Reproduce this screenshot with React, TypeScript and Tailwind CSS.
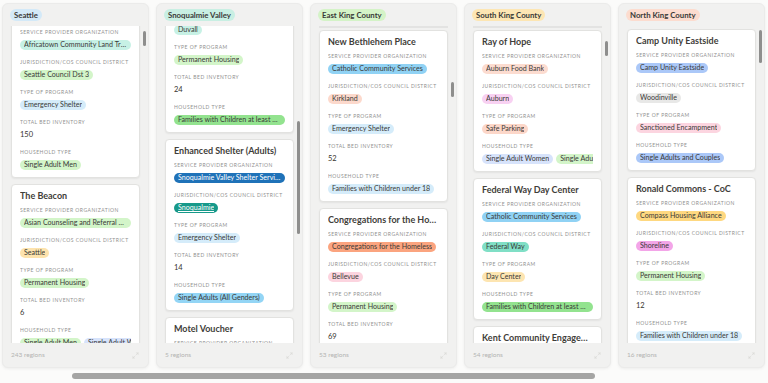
import { Maximize2 } from 'lucide-react';

type Tag = { text: string; cls: string };
type Field = { label: string; tags?: Tag[]; value?: string };
type Card = { title: string; fields: Field[] };
type Column = {
  name: string;
  headCls: string;
  count: string;
  offset: string;
  sliver?: boolean;
  thumb: string;
  cards: Card[];
};

const ORG = 'Service Provider Organization';
const JUR = 'Jurisdiction/COS Council District';
const TYPE = 'Type of Program';
const BEDS = 'Total Bed Inventory';
const HH = 'Household Type';

const mint = 'bg-[#c7f1e5]';
const green = 'bg-[#d3f5c9]';
const sky = 'bg-[#d5ecfa]';
const strongGreen = 'bg-[#93e38f]';

const columns: Column[] = [
  {
    name: 'Seattle',
    headCls: 'bg-[#d3e9f8]',
    count: '243 regions',
    offset: '-mt-[20px]',
    thumb: 'top-[27px] h-[15px]',
    cards: [
      {
        title: 'Africatown Plaza',
        fields: [
          { label: ORG, tags: [{ text: 'Africatown Community Land Trust', cls: mint }] },
          { label: JUR, tags: [{ text: 'Seattle Council Dst 3', cls: green }] },
          { label: TYPE, tags: [{ text: 'Emergency Shelter', cls: sky }] },
          { label: BEDS, value: '150' },
          { label: HH, tags: [{ text: 'Single Adult Men', cls: green }] },
        ],
      },
      {
        title: 'The Beacon',
        fields: [
          { label: ORG, tags: [{ text: 'Asian Counseling and Referral Service', cls: green }] },
          { label: JUR, tags: [{ text: 'Seattle', cls: 'bg-[#fde3ad]' }] },
          { label: TYPE, tags: [{ text: 'Permanent Housing', cls: green }] },
          { label: BEDS, value: '6' },
          {
            label: HH,
            tags: [
              { text: 'Single Adult Men', cls: green },
              { text: 'Single Adult Women', cls: 'bg-[#d7e3fb]' },
            ],
          },
        ],
      },
    ],
  },
  {
    name: 'Snoqualmie Valley',
    headCls: 'bg-[#c8efe3]',
    count: '5 regions',
    offset: '-mt-[65px]',
    thumb: 'top-[117px] h-[113px]',
    cards: [
      {
        title: 'Duvall Shelter',
        fields: [
          { label: ORG, tags: [{ text: 'Snoqualmie Valley Shelter Services', cls: mint }] },
          { label: JUR, tags: [{ text: 'Duvall', cls: mint }] },
          { label: TYPE, tags: [{ text: 'Permanent Housing', cls: green }] },
          { label: BEDS, value: '24' },
          { label: HH, tags: [{ text: 'Families with Children at least one adult', cls: strongGreen }] },
        ],
      },
      {
        title: 'Enhanced Shelter (Adults)',
        fields: [
          { label: ORG, tags: [{ text: 'Snoqualmie Valley Shelter Services', cls: 'bg-[#1f72b8] text-white' }] },
          { label: JUR, tags: [{ text: 'Snoqualmie', cls: 'bg-[#17998a] text-white underline' }] },
          { label: TYPE, tags: [{ text: 'Emergency Shelter', cls: sky }] },
          { label: BEDS, value: '14' },
          { label: HH, tags: [{ text: 'Single Adults (All Genders)', cls: 'bg-[#93d5f5]' }] },
        ],
      },
      {
        title: 'Motel Voucher',
        fields: [
          { label: ORG, tags: [{ text: 'Snoqualmie Valley Shelter Services', cls: mint }] },
        ],
      },
    ],
  },
  {
    name: 'East King County',
    headCls: 'bg-[#d4f3c7]',
    count: '53 regions',
    offset: '',
    sliver: true,
    thumb: 'top-[78px] h-[15px]',
    cards: [
      {
        title: 'New Bethlehem Place',
        fields: [
          { label: ORG, tags: [{ text: 'Catholic Community Services', cls: 'bg-[#90d2f4]' }] },
          { label: JUR, tags: [{ text: 'Kirkland', cls: 'bg-[#fcd9cc]' }] },
          { label: TYPE, tags: [{ text: 'Emergency Shelter', cls: sky }] },
          { label: BEDS, value: '52' },
          { label: HH, tags: [{ text: 'Families with Children under 18', cls: sky }] },
        ],
      },
      {
        title: 'Congregations for the Homeless Shelter',
        fields: [
          { label: ORG, tags: [{ text: 'Congregations for the Homeless', cls: 'bg-[#fba47f]' }] },
          { label: JUR, tags: [{ text: 'Bellevue', cls: 'bg-[#fcd4df]' }] },
          { label: TYPE, tags: [{ text: 'Permanent Housing', cls: green }] },
          { label: BEDS, value: '69' },
        ],
      },
    ],
  },
  {
    name: 'South King County',
    headCls: 'bg-[#fde6b3]',
    count: '54 regions',
    offset: '',
    sliver: true,
    thumb: 'top-[37px] h-[15px]',
    cards: [
      {
        title: 'Ray of Hope',
        fields: [
          { label: ORG, tags: [{ text: 'Auburn Food Bank', cls: 'bg-[#fcdcd0]' }] },
          { label: JUR, tags: [{ text: 'Auburn', cls: 'bg-[#f8d1f2]' }] },
          { label: TYPE, tags: [{ text: 'Safe Parking', cls: 'bg-[#fcd7c9]' }] },
          {
            label: HH,
            tags: [
              { text: 'Single Adult Women', cls: 'bg-[#d7e3fb]' },
              { text: 'Single Adult Men', cls: green },
            ],
          },
        ],
      },
      {
        title: 'Federal Way Day Center',
        fields: [
          { label: ORG, tags: [{ text: 'Catholic Community Services', cls: 'bg-[#90d2f4]' }] },
          { label: JUR, tags: [{ text: 'Federal Way', cls: 'bg-[#80dfc6]' }] },
          { label: TYPE, tags: [{ text: 'Day Center', cls: 'bg-[#fde5b1]' }] },
          { label: HH, tags: [{ text: 'Families with Children at least one adult', cls: strongGreen }] },
        ],
      },
      {
        title: 'Kent Community Engagement Center',
        fields: [{ label: ORG, tags: [{ text: 'Catholic Community Services', cls: 'bg-[#90d2f4]' }] }],
      },
    ],
  },
  {
    name: 'North King County',
    headCls: 'bg-[#fcdccf]',
    count: '16 regions',
    offset: '',
    thumb: 'top-[26px] h-[33px]',
    cards: [
      {
        title: 'Camp Unity Eastside',
        fields: [
          { label: ORG, tags: [{ text: 'Camp Unity Eastside', cls: 'bg-[#abc8f8]' }] },
          { label: JUR, tags: [{ text: 'Woodinville', cls: 'bg-[#e8e8e7]' }] },
          { label: TYPE, tags: [{ text: 'Sanctioned Encampment', cls: 'bg-[#fcd5e0]' }] },
          { label: HH, tags: [{ text: 'Single Adults and Couples', cls: 'bg-[#abc8f8]' }] },
        ],
      },
      {
        title: 'Ronald Commons - CoC',
        fields: [
          { label: ORG, tags: [{ text: 'Compass Housing Alliance', cls: 'bg-[#fed880]' }] },
          { label: JUR, tags: [{ text: 'Shoreline', cls: 'bg-[#f3a5e8]' }] },
          { label: TYPE, tags: [{ text: 'Permanent Housing', cls: green }] },
          { label: BEDS, value: '12' },
          { label: HH, tags: [{ text: 'Families with Children under 18', cls: sky }] },
        ],
      },
    ],
  },
];

function Pill({ tag }: { tag: Tag }) {
  return (
    <span
      className={`flex h-[10px] max-w-full shrink-0 items-center rounded-full px-[4px] text-[7.1px] leading-none text-[#3a3a38] ${tag.cls}`}
    >
      <span className="truncate">{tag.text}</span>
    </span>
  );
}

function BoardCard({ card }: { card: Card }) {
  return (
    <div className="rounded-[4px] border border-[#e2e2e0] bg-white px-[8px] pt-[5px] pb-[7px] shadow-[0_1px_2px_rgba(0,0,0,0.06)]">
      <div className="mb-[5px] truncate text-[9px] leading-[12px] font-bold text-[#3f3e3a]">{card.title}</div>
      <div className="flex flex-col gap-[9px]">
        {card.fields.map((f) => (
          <div key={f.label}>
            <div className="truncate text-[5px] leading-[7px] tracking-[0.1em] text-[#919190] uppercase">{f.label}</div>
            {f.tags ? (
              <div className="mt-[4px] flex gap-[3px] overflow-hidden">
                {f.tags.map((t) => (
                  <Pill key={t.text} tag={t} />
                ))}
              </div>
            ) : (
              <div className="mt-[4px] h-[10px] text-[7.5px] leading-[10px] text-[#37352f]">{f.value}</div>
            )}
          </div>
        ))}
      </div>
    </div>
  );
}

export default function App() {
  return (
    <div className="h-[383px] w-[768px] overflow-hidden bg-[#fbfbfa] font-['Lato','Open_Sans',sans-serif]">
      <div className="flex gap-[7px] pt-[3px] pl-[2px]">
        {columns.map((col) => (
          <div
            key={col.name}
            className="relative flex h-[365px] w-[147px] shrink-0 flex-col rounded-[6px] border border-[#ebebea] bg-[#f1f1f0] shadow-[0_1px_3px_rgba(0,0,0,0.06)]"
          >
            <div className="flex h-[22px] items-start pt-[5px] pl-[7px]">
              <span
                className={`flex h-[12px] items-center rounded-full px-[4px] text-[7.8px] leading-[12px] font-bold text-[#3a3a38] ${col.headCls}`}
              >
                {col.name}
              </span>
            </div>
            <div className="h-[317px] overflow-hidden px-[8px]">
              <div className={`flex flex-col gap-[6px] ${col.offset}`}>
                {col.sliver && <div className="-mb-[4px] h-[2px] bg-[#e3e3e2]" />}
                {!col.sliver && !col.offset && <div className="-mb-[3px] h-[0px]" />}
                {col.cards.map((c) => (
                  <BoardCard key={c.title} card={c} />
                ))}
              </div>
            </div>
            <div className="flex flex-1 items-center justify-between pr-[9px] pl-[8px]">
              <span className="text-[6.5px] leading-[8px] text-[#b4b4b2]">{col.count}</span>
              <Maximize2 size={7} strokeWidth={1.5} className="text-[#cfcfcd]" />
            </div>
            <div className={`absolute right-[2px] w-[3px] rounded-full bg-[#8e8e8d] ${col.thumb}`} />
          </div>
        ))}
      </div>
      <div className="mt-[5px] ml-[72px] h-[6px] w-[523px] rounded-full bg-[#a5a5a4]" />
    </div>
  );
}
